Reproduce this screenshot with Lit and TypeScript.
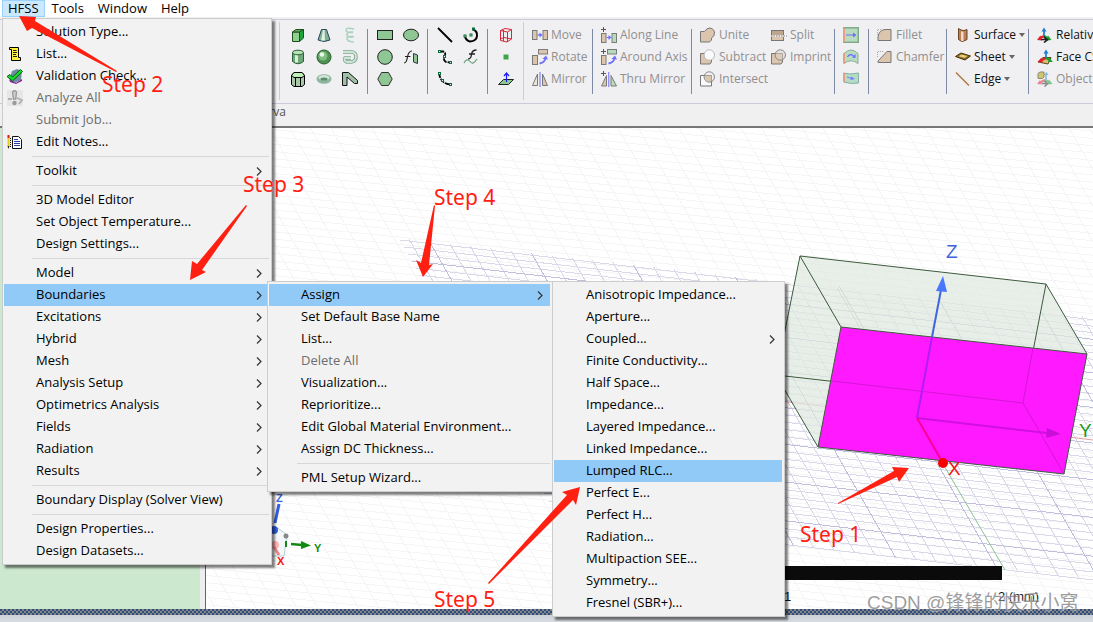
import { LitElement, html, svg, css, nothing, SVGTemplateResult } from "lit";
import { customElement, property } from "lit/decorators.js";
import { classMap } from "lit/directives/class-map.js";

/* ---------- icon drawings, 16 x 16 ---------- */
const G = "#8fc794";
const T = "#dcc5ad";
const icons: Record<string, SVGTemplateResult> = {
  box: svg`<path d="M2.500 5H9.500V14.500H2.500Z" fill="#8fd08f" stroke="#1f4f1f"/><path d="M2.500 5 6 2.500H13.500L9.500 5Z" fill="#5faf5f" stroke="#1f4f1f"/><path d="M9.500 5 13.500 2.500V11L9.500 14.500Z" fill="#1fa53a" stroke="#1f4f1f"/>`,
  cone: svg`<path d="M5.500 2.500H10.500L14 13Q8 16 2 13Z" fill="#7fae95" stroke="#2c4a5c"/><path d="M7 3 5 13.500H9L8.500 3Z" fill="#dff2e4"/>`,
  helix: svg`<g fill="none" stroke="#a9d3bf" stroke-width="1.500"><path d="M12 2Q4 0 4 3T11 5.500"/><path d="M11 5Q4 5 5 8T12 9.500"/><path d="M11 9.500Q4 9 5 12T12 15"/></g>`,
  cyl: svg`<path d="M2.500 3.500V12.500Q8 17 13.500 12.500V3.500Z" fill="#6ea878" stroke="#2f5f3a"/><path d="M5 4V13.500H8V4Z" fill="#d6efd9"/><ellipse cx="8" cy="3.500" rx="5.500" ry="2.300" fill="#b5e2b5" stroke="#2f5f3a"/>`,
  sphere: svg`<circle cx="8" cy="8" r="7" fill="#4e9152" stroke="#2c6132"/><circle cx="7" cy="7" r="4.500" fill="#7fbd80"/><circle cx="6" cy="5.500" r="2.300" fill="#e8f7e6"/>`,
  spiral: svg`<path d="M1 3H10Q14 3.500 14 8T9 13H5Q1.500 12 3 9H9" fill="none" stroke="#7ea58e" stroke-width="3.500"/><path d="M1 3H10Q14 3.500 14 8T9 13H5Q1.500 12 3 9H9" fill="none" stroke="#cfe6d6" stroke-width="1.800"/>`,
  prism: svg`<path d="M1.500 4.500 4 1.500H12L14.500 4.500V13.500L12 15.500H4L1.500 13.500Z" fill="#a8c8a8" stroke="#000"/><path d="M1.500 4.500 4 1.500H12L14.500 4.500 12 6.500H4Z" fill="#bff0b8" stroke="#000"/><path d="M5.500 6.500V15.500M10.500 6.500V15.500" stroke="#000"/>`,
  torus: svg`<ellipse cx="8" cy="8" rx="7.500" ry="4.800" fill="#8db69d"/><ellipse cx="8" cy="6.700" rx="5.500" ry="2.600" fill="#cfe5d6"/><ellipse cx="8" cy="8" rx="3.500" ry="1.500" fill="#5c8a6d"/>`,
  sweep: svg`<path d="M.5 14.500V1.500H6.500L15.500 9.500V12.500H12.500L5 6V14.500Z" fill="#9fc0a6" stroke="#111"/>`,
  rect: svg`<rect x=".5" y="3.500" width="15" height="9" fill="${G}" stroke="#222"/>`,
  ellipse: svg`<ellipse cx="8" cy="8" rx="7.500" ry="5.800" fill="${G}" stroke="#222"/>`,
  circle: svg`<circle cx="8" cy="8" r="7.300" fill="${G}" stroke="#222"/>`,
  eqsurf: svg`<path d="M1 14Q3.500 14 4.500 8T9 2M2 7.500H7.500" fill="none" stroke="#222" stroke-width="1.200"/><path d="M10.500 4.500 14.500 6V14.500L10.500 13Z" fill="${G}" stroke="#335"/>`,
  hex: svg`<path d="M.8 8 4.500 1.500H11.500L15.200 8 11.500 14.500H4.500Z" fill="${G}" stroke="#333"/>`,
  line: svg`<path d="M1 1 15 15" stroke="#000" stroke-width="1.800"/>`,
  arc: svg`<path d="M10 2.500Q14.500 4 14 9T7 14.500Q3 13.500 2 9.500" fill="none" stroke="#000" stroke-width="2"/><g fill="#dff5e4" stroke="#0c6b3a"><rect x="9.500" y="1" width="2" height="2"/><rect x="1" y="8" width="2" height="2"/><rect x="7" y="7" width="2" height="2"/></g>`,
  spline: svg`<path d="M2 2.500H6Q9 3 8 7Q5.500 11 9 13L13 13.500" fill="none" stroke="#000" stroke-width="1.800" stroke-dasharray="5 1"/><g fill="#dff5e4" stroke="#0c6b3a"><rect x="1.500" y="1.500" width="2" height="2"/><rect x="6.500" y="6.500" width="2" height="2"/><rect x="12.500" y="12.500" width="2" height="2"/></g>`,
  eqcurve: svg`<path d="M5 10Q8 10 8.500 5.500T13.500 1M6 5H12" fill="none" stroke="#222" stroke-width="1.300"/><path d="M1 14Q4 8.500 7 12.500T14 10" fill="none" stroke="#6aa27e" stroke-width="1.200"/>`,
  arc2: svg`<path d="M2 2Q3.500 12.500 13 13.500" fill="none" stroke="#000" stroke-width="1.800" stroke-dasharray="5 1"/><g fill="#dff5e4" stroke="#0c6b3a"><rect x="1.500" y="1.500" width="2" height="2"/><rect x="4.500" y="8.500" width="2" height="2"/><rect x="12.500" y="12.500" width="2" height="2"/></g>`,
  region: svg`<g fill="none" stroke="#d9263a"><path d="M2.500 3.500 7 1.500 13.500 2.500V12L9 15 2.500 13.500Z"/><path d="M2.500 3.500 9.500 5 13.500 2.500M9.500 5V15M5.500 3V14M2.500 12 6 10.500 13.500 12"/></g>`,
  point: svg`<rect x="5.500" y="5.500" width="5" height="5" fill="#3fa548"/>`,
  plane: svg`<path d="M.5 13.500 5.500 8.500H15.500L10.500 13.500Z" fill="${G}" stroke="#222"/><path d="M8.500 11V3" stroke="#1a1aff" stroke-width="1.200"/><path d="M6 5 8.500 2 11 5" fill="none" stroke="#1a1aff" stroke-width="1.200"/>`,
  move: svg`<g fill="${T}" stroke="#7a7a7a"><rect x=".5" y="3.500" width="4.500" height="9"/><rect x="11" y="3.500" width="4.500" height="9"/></g><path d="M5.500 8H8" stroke="#6d6dff" stroke-width="1.300"/><path d="M7.500 5.500 10.500 8 7.500 10.500Z" fill="#6d6dff"/>`,
  rotate: svg`<g fill="${T}" stroke="#7a7a7a"><rect x=".5" y="6.500" width="5" height="9"/><rect x="6.500" y=".5" width="9" height="4.500"/></g><path d="M7.500 14.500Q13 13.500 13.500 9" fill="none" stroke="#6d6dff" stroke-width="1.800"/><path d="M10.500 10 14 6.500 16 10.500Z" fill="#6d6dff"/>`,
  mirror: svg`<path d="M5.500 3V14.500H.5Z" fill="#eee5da" stroke="#7a7a7a"/><path d="M10.500 3V14.500H15.500Z" fill="${T}" stroke="#7a7a7a"/><path d="M8 1V16" stroke="#6d6dff"/>`,
  along: svg`<path d="M2.500 0V5M0 2.500H5" stroke="#555"/><rect x=".5" y="6.500" width="4.500" height="9" fill="${T}" stroke="#7a7a7a"/><rect x="11" y="6.500" width="4.500" height="9" fill="#b5dcbc" stroke="#7a7a7a"/><path d="M5.500 10.500H8" stroke="#6d6dff"/><path d="M7.500 8 10.500 10.500 7.500 13Z" fill="#6d6dff"/>`,
  around: svg`<path d="M2.500 0V5M0 2.500H5" stroke="#555"/><rect x=".5" y="6.500" width="4.500" height="9" fill="${T}" stroke="#7a7a7a"/><rect x="6.500" y=".5" width="9" height="4.500" fill="#b5dcbc" stroke="#7a7a7a"/><path d="M7.500 14.500Q13 13.500 13.500 9" fill="none" stroke="#6d6dff" stroke-width="1.800"/><path d="M10.500 10 14 6.500 16 10.500Z" fill="#6d6dff"/>`,
  thru: svg`<path d="M2.500 0V5M0 2.500H5" stroke="#555"/><path d="M5.500 4.500V15H.5Z" fill="${T}" stroke="#7a7a7a"/><path d="M10 4.500V15H15.500Z" fill="#b5dcbc" stroke="#7a7a7a"/><path d="M7.800 1V16" stroke="#6d6dff"/>`,
  unite: svg`<path d="M.5 15V4.500H4.500Q6.500 1 10 1Q14.500 2 14.500 6Q14.500 9.500 11.500 11V13L9.500 15Z" fill="${T}" stroke="#777"/>`,
  subtract: svg`<path d="M.5 15V4.500H11.500V13L10 15Z" fill="${T}" stroke="#777"/><circle cx="9.300" cy="6" r="5.200" fill="#fafafa" stroke="#bbb"/>`,
  intersect: svg`<path d="M.5 15V4.500H11.500V15Z" fill="#fafafa" stroke="#777"/><path d="M4.500 4.500H11.500V10.800Q5 12 4.500 4.500Z" fill="${T}"/><circle cx="9.300" cy="6" r="5.200" fill="none" stroke="#888"/>`,
  split: svg`<rect x=".5" y="3.500" width="12" height="10" fill="${T}" stroke="#777"/><path d="M1 4H12V8.500H1Z" fill="#bda58e"/><path d="M0 9H16" stroke="#fff" stroke-width="1.500"/><path d="M0 9H16" stroke="#777" stroke-dasharray="1.500 1"/>`,
  imprint: svg`<path d="M.5 15V4.500H11.500V13L10 15Z" fill="${T}" stroke="#777"/><circle cx="9.300" cy="6" r="5.200" fill="#ddd3c8" fill-opacity=".5" stroke="#888"/>`,
  sw1: svg`<rect x=".8" y=".8" width="14.500" height="14.500" fill="#b9dcc0" stroke="#7da98a" stroke-width="1.500"/><path d="M0 1V15H2V1Z" fill="#e8a080"/><path d="M3 8H11" stroke="#6d6dff"/><path d="M10 5.500 13.500 8 10 10.500Z" fill="#6d6dff"/>`,
  sw2: svg`<path d="M1 14.500V4.500Q8 -2.500 15 4.500V14.500Q8 9 1 14.500Z" fill="#b9dcc0" stroke="#86b093"/><path d="M0 4V14.500H2V4Z" fill="#e8a080"/><path d="M4.500 8Q7 4 10.500 7" fill="none" stroke="#6d6dff" stroke-width="1.300"/><path d="M9 8.500 12.500 5V9Z" fill="#6d6dff"/>`,
  sw3: svg`<path d="M.5 2Q6 4 15.500 2V12Q9 13.500 .5 11Z" fill="#b5dbc8" stroke="#86b0a0"/><path d="M0 2V11H2V2Z" fill="#e8a080"/><path d="M4 6 9 7.500" stroke="#6d7dff"/><path d="M8 5.500 12 8 7.500 9Z" fill="#6d7dff"/>`,
  fillet: svg`<path d="M.5 8V2.500H5" fill="none" stroke="#aaa" stroke-dasharray="1 1"/><path d="M1 13.500V10Q2 3 8 2.500H14V13.500Z" fill="${T}" stroke="#777"/>`,
  chamfer: svg`<path d="M.5 8V2.500H7" fill="none" stroke="#aaa" stroke-dasharray="1 1"/><path d="M1 13.500V12L10 2.500H14V13.500Z" fill="${T}" stroke="#777"/>`,
  surface: svg`<path d="M3.500 1.500V12.500Q7 16 10 13.500L12 12.500V2.500Q9 4.500 6 3Z" fill="#b8835a" stroke="#6b4223"/><path d="M6 4.500V14H8.500V4.500Z" fill="#f3d9bd"/>`,
  sheet: svg`<path d="M.5 7.500 6 4 15.500 7 10 11Z" fill="#8a6a1f" stroke="#4a3208"/><path d="M3.500 7.300 6.500 5.500 12.500 7 9.500 9Z" fill="#e3cf7e"/>`,
  edge: svg`<path d="M1 1.500 14 14.500" stroke="#b07a48" stroke-width="1.500"/>`,
  relcs: svg`<path d="M7 9V3" stroke="#1e7fd6" stroke-width="1.800"/><path d="M4.500 4.500 7 .5 9.500 4.500Z" fill="#1e7fd6"/><path d="M7 9 2 11.500" stroke="#e3202b" stroke-width="2"/><path d="M3.500 8.500 0 13 5 13.500Z" fill="#e3202b"/><path d="M7 9 12 11.500" stroke="#16a02c" stroke-width="2"/><path d="M11 8.500 14.500 13 9.500 13.500Z" fill="#16a02c"/><path d="M4 12.500H9M7 10 10.500 12.700 7 15.500" fill="none" stroke="#222" stroke-width="1.600"/>`,
  facecs: svg`<path d="M1 13 6 8.500H14L11 15Z" fill="#d8bd7a" stroke="#5b4a1c"/><path d="M9 9V3" stroke="#1e7fd6" stroke-width="1.800"/><path d="M6.500 4.500 9 .5 11.500 4.500Z" fill="#1e7fd6"/><path d="M9 9 4 11.500" stroke="#e3202b" stroke-width="2"/><path d="M4 9 .5 13 6 13.500Z" fill="#e3202b"/><path d="M9 9 13 11" stroke="#16a02c" stroke-width="2"/><path d="M12.500 8.500 15.800 13 11 13Z" fill="#16a02c"/>`,
  objcs: svg`<path d="M1 2.500 3 1H7V6L5.500 7.500H1Z" fill="#cfc56a" stroke="#8c8a70"/><g opacity=".5"><path d="M9 9V3" stroke="#1e7fd6" stroke-width="1.500"/><path d="M7 4 9.500 1 11.500 4Z" fill="#1e7fd6"/><path d="M8 9 3 11.500" stroke="#e3202b" stroke-width="2"/><path d="M3 9 0 13 5 13.500Z" fill="#e3202b"/><path d="M8 9 13 11.500" stroke="#16a02c" stroke-width="2"/><path d="M12 8.500 15.500 13 10.500 13.500Z" fill="#16a02c"/><path d="M5 12.500H9M7.500 10 10.500 12.700 7.500 15.500" fill="none" stroke="#222" stroke-width="1.500"/></g>`,
  list: svg`<path d="M2.500 1.500H11.500V11.500H13.500V14.500H4.500V3.500H2.500Z" fill="#ffee3a" stroke="#000"/><path d="M6 4.500H9.500M6 6.500H10M6 8.500H9M6 10.500H10" stroke="#222"/>`,
  check: svg`<path d="M5 3 10 1 15 3 14 12 8 15 2 13Z" fill="#6f8fa0"/><path d="M3 12 9 15 15 11V13L9 16 3 14Z" fill="#8a1fa0"/><path d="M0 8.500 3 6.500 5.500 9 13.500 1.500 15.500 3.500 5.500 13Z" fill="#12e02a" stroke="#064d10" stroke-width=".9"/>`,
  analyze: svg`<rect width="16" height="16" fill="#e6e6e6"/><path d="M5.500 2Q8 -.5 9.500 2L8.800 9H6.500Z" fill="#cfcfcf" stroke="#999" stroke-width="1.300"/><circle cx="7.500" cy="13" r="2.200" fill="#999"/><path d="M1 9H5M10 8 15 10 12 14" stroke="#b0b0b0" stroke-width="1.800" fill="none"/>`,
  notes: svg`<path d="M1.500 2V12" stroke="#e8c81e" stroke-width="2"/><path d="M1.500 1V4" stroke="#d92020" stroke-width="2"/><path d="M.5 12H2.500L1.500 15Z" fill="#222"/><path d="M5.500 2.500H11.500L14.500 5.500V14.500H5.500Z" fill="#fff" stroke="#111"/><path d="M7 5.500H11M7 7.500H13M7 9.500H13M7 11.500H13" stroke="#2a3fa8"/><path d="M3.500 4V13" stroke="#111" stroke-dasharray="1 1"/>`,
};

const icon = (name: string) =>
  html`<svg class="icon" viewBox="0 0 16 16" width="16" height="16" aria-hidden="true">${icons[name]}</svg>`;

/* ---------- drop-down menus ---------- */
interface Item { t: string; icon?: string; off?: boolean; sub?: boolean; hot?: boolean }
type Entry = Item | "-";

@customElement("menu-panel")
class MenuPanel extends LitElement {
  @property({ attribute: false }) items: Entry[] = [];
  static styles = css`
    :host { display: block; box-sizing: border-box; background: #f2f2f2; border: 1px solid #ccc; padding: 2px 2px 2px 1px; box-shadow: 3px 3px 2px rgba(0, 0, 0, 0.5); }
    button { all: unset; box-sizing: border-box; display: flex; align-items: center; width: 100%; height: 22px; padding-right: 7px; color: #000; font: 13px/20px "Open Sans", "Noto Sans", sans-serif; white-space: nowrap; }
    .hot { background: #91c9f7; }
    .off { color: #6d6d6d; }
    .slot { width: 32px; display: flex; padding-left: 3px; box-sizing: border-box; flex: none; }
    .label { flex: 1; padding-bottom: 2px; }
    hr { border: 0; height: 1px; margin: 3px 0 3px 28px; background: #d7d7d7; }
    .chev { width: 6px; height: 9px; fill: none; stroke: #333; stroke-width: 1.2; }
  `;
  render() {
    return this.items.map((e) =>
      e === "-"
        ? html`<hr />`
        : html`<button role="menuitem" class=${classMap({ hot: !!e.hot, off: !!e.off })} ?disabled=${e.off}>
            <span class="slot">${e.icon ? icon(e.icon) : nothing}</span>
            <span class="label">${e.t}</span>
            ${e.sub ? html`<svg class="chev" viewBox="0 0 6 9"><path d="M1 .5 5 4.500 1 8.500" /></svg>` : nothing}
          </button>`
    );
  }
}

const mainMenu: Entry[] = [
  { t: "Solution Type..." },
  { t: "List...", icon: "list" },
  { t: "Validation Check...", icon: "check" },
  { t: "Analyze All", icon: "analyze", off: true },
  { t: "Submit Job...", off: true },
  { t: "Edit Notes...", icon: "notes" },
  "-",
  { t: "Toolkit", sub: true },
  "-",
  { t: "3D Model Editor" },
  { t: "Set Object Temperature..." },
  { t: "Design Settings..." },
  "-",
  { t: "Model", sub: true },
  { t: "Boundaries", sub: true, hot: true },
  { t: "Excitations", sub: true },
  { t: "Hybrid", sub: true },
  { t: "Mesh", sub: true },
  { t: "Analysis Setup", sub: true },
  { t: "Optimetrics Analysis", sub: true },
  { t: "Fields", sub: true },
  { t: "Radiation", sub: true },
  { t: "Results", sub: true },
  "-",
  { t: "Boundary Display (Solver View)" },
  "-",
  { t: "Design Properties..." },
  { t: "Design Datasets..." },
];
const boundaryMenu: Entry[] = [
  { t: "Assign", sub: true, hot: true },
  { t: "Set Default Base Name" },
  { t: "List..." },
  { t: "Delete All", off: true },
  { t: "Visualization..." },
  { t: "Reprioritize..." },
  { t: "Edit Global Material Environment..." },
  { t: "Assign DC Thickness..." },
  "-",
  { t: "PML Setup Wizard..." },
];
const assignMenu: Entry[] = [
  { t: "Anisotropic Impedance..." },
  { t: "Aperture..." },
  { t: "Coupled...", sub: true },
  { t: "Finite Conductivity..." },
  { t: "Half Space..." },
  { t: "Impedance..." },
  { t: "Layered Impedance..." },
  { t: "Linked Impedance..." },
  { t: "Lumped RLC...", hot: true },
  { t: "Perfect E..." },
  { t: "Perfect H..." },
  { t: "Radiation..." },
  { t: "Multipaction SEE..." },
  { t: "Symmetry..." },
  { t: "Fresnel (SBR+)..." },
];

/* ---------- ribbon ---------- */
interface Tool { i: string; t?: string; off?: boolean; drop?: boolean; label?: string }
interface Group { cls: string; tools: Tool[] }

const glyphs = (...names: string[]): Tool[] => names.map((n) => ({ i: n, label: n }));
const dim = (i: string, t: string): Tool => ({ i, t, off: true });

const groups: Group[] = [
  { cls: "glyphs solids", tools: glyphs("box", "cyl", "prism", "cone", "sphere", "torus", "helix", "spiral", "sweep") },
  { cls: "glyphs sheets", tools: glyphs("rect", "circle", "hex", "ellipse", "eqsurf") },
  { cls: "glyphs lines", tools: glyphs("line", "spline", "arc2", "arc", "eqcurve") },
  { cls: "glyphs misc light", tools: glyphs("region", "point", "plane") },
  { cls: "transform", tools: [dim("move", "Move"), dim("rotate", "Rotate"), dim("mirror", "Mirror")] },
  { cls: "duplicate", tools: [dim("along", "Along Line"), dim("around", "Around Axis"), dim("thru", "Thru Mirror")] },
  { cls: "boolean", tools: [dim("unite", "Unite"), dim("subtract", "Subtract"), dim("intersect", "Intersect"), dim("split", "Split"), dim("imprint", "Imprint")] },
  { cls: "sweeps", tools: glyphs("sw1", "sw2", "sw3") },
  { cls: "corners", tools: [dim("fillet", "Fillet"), dim("chamfer", "Chamfer")] },
  { cls: "surfaces", tools: [{ i: "surface", t: "Surface", drop: true }, { i: "sheet", t: "Sheet", drop: true }, { i: "edge", t: "Edge", drop: true }] },
  { cls: "systems", tools: [{ i: "relcs", t: "Relative CS" }, { i: "facecs", t: "Face CS" }, dim("objcs", "Object CS")] },
];

@customElement("tool-ribbon")
class ToolRibbon extends LitElement {
  static styles = css`
    :host { display: flex; box-sizing: border-box; height: 85px; margin-top: 2px; padding-top: 2px; background: #f0eff2; border-top: 1px solid #cccadb; border-bottom: 1px solid #cccadb; overflow: hidden; }
    .home { flex: none; width: 280px; box-sizing: border-box; height: 78px; border-right: 1px solid #cccadb; }
    .group { flex: none; display: grid; grid-auto-flow: column; grid-template-rows: repeat(3, 22px); grid-auto-columns: max-content; align-content: start; padding: 2px 0 0 8px; box-sizing: border-box; height: 78px; position: relative; }
    .glyphs { justify-content: center; padding-left: 0; grid-auto-columns: 26px; }
    .group::after { content: ""; position: absolute; right: 0; top: 7px; height: 65px; width: 1px; background: #7c8aa3; }
    .light::after { top: 0; height: 78px; background: #cccadb; }
    .solids { width: 88px; }
    .sheets, .lines { width: 60px; }
    .misc { width: 36px; }
    .transform { width: 69px; }
    .duplicate { width: 99px; }
    .boolean { width: 143px; grid-auto-columns: 71px; }
    .sweeps { width: 34px; }
    .corners { width: 78px; }
    .surfaces { width: 82px; }
    .systems { width: 120px; }
    button { all: unset; display: flex; align-items: center; gap: 3px; height: 22px; font: 12px/22px "Open Sans", "Noto Sans", sans-serif; color: #111; white-space: nowrap; }
    .glyphs button { justify-content: center; }
    .off { color: #909090; }
    .caret { width: 0; height: 0; border: 3px solid transparent; border-top: 4px solid #666; border-bottom: 0; }
  `;
  render() {
    return html`<div class="home"></div>
      ${groups.map(
        (g) => html`<div class="group ${g.cls}">
          ${g.tools.map(
            (t) => html`<button class=${classMap({ off: !!t.off })} ?disabled=${t.off} aria-label=${t.t ?? t.label ?? ""}>
              ${icon(t.i)}${t.t ? html`<span>${t.t}</span>` : nothing}${t.drop ? html`<i class="caret"></i>` : nothing}
            </button>`
          )}
        </div>`
      )}`;
  }
}

/* ---------- 3D view ---------- */
const SLOPE = 0.115;
const LEAN = 0.57;

function faintGrid() {
  const out: SVGTemplateResult[] = [];
  for (let c = 20; c < 640; c += 7.3) out.push(svg`<path d="M200 ${c}L1100 ${c + 900 * 0.1}" />`);
  for (let x = -120; x < 1100; x += 20.5) out.push(svg`<path d="M${x} 128L${x + 480 * LEAN} 608" />`);
  return out;
}

function mainGrid() {
  const minor: SVGTemplateResult[] = [];
  const major: SVGTemplateResult[] = [];
  let c = 194;
  const rows = 36;
  for (let r = 0; r <= rows; r++) {
    const x = 400 + ((c - 194) / 0.934) * LEAN;
    (r % 5 === 3 ? major : minor).push(svg`<path d="M${x} ${c + SLOPE * x}L1100 ${c + SLOPE * 1100}" />`);
    c += 6.5 + (1.5 * r) / rows;
  }
  const depth = (c - 194 - 6) / 0.934;
  for (let i = 0; i < 36; i++) {
    const x = 409 + i * 20.4;
    const y = 192 + SLOPE * x;
    (i % 5 === 1 ? major : minor).push(svg`<path d="M${x} ${y}L${x + depth * LEAN} ${y + depth}" />`);
  }
  return svg`<g stroke="#d9d9ea">${minor}</g><g stroke="#c0c0de">${major}</g>`;
}

@customElement("model-view")
class ModelView extends LitElement {
  static styles = css`
    :host { display: block; background: #fff; overflow: hidden; min-width: 0; }
    svg { display: block; width: 100%; height: 100%; }
    text { font-family: "Liberation Sans", Arial, sans-serif; }
    .axis { font-size: 19px; }
    .mini { font-size: 11px; font-weight: 700; }
    .scale { font-size: 13px; fill: #111; }
  `;
  render() {
    return html`<svg viewBox="206 128 887 481" preserveAspectRatio="xMinYMin slice" role="img" aria-label="3D model">
      <g stroke="#f5f5f5" fill="none" shape-rendering="crispEdges">${faintGrid()}</g>
      <g fill="none" shape-rendering="crispEdges">${mainGrid()}</g>
      <path d="M780 401L1093 440" stroke="#e0a0a0" fill="none" />
      <path d="M839 286L1005 570" stroke="#8fbf93" fill="none" />
      <path d="M800 256 1046 284 1087 354 1064 474 818 447 776 375Z" fill="#dfe9e1" fill-opacity=".72" />
      <path d="M800 256 1046 284 1087 354M800 256 776 375 818 447M800 256 841 327M1046 284 1023 403M776 375 1023 403 1064 474" fill="none" stroke="#3c5a3c" />
      <path d="M841 327 1087 354 1064 474 818 447Z" fill="#ff19ff" stroke="#3c5a3c" />
      <path d="M832 381 1023 403 1064 474M1023 403 1033 348" fill="none" stroke="#d416d6" />
      <path d="M917 418 932 337" stroke="#b41cf5" stroke-width="2" />
      <path d="M932 337 941 290" stroke="#3f66dc" stroke-width="2" />
      <path d="M943 276 936 291 947 292Z" fill="#4a76ff" />
      <path d="M917 418 1047 433" stroke="#d00fe0" stroke-width="2" />
      <path d="M1047 428 1061 434 1046 438Z" fill="#c90fd8" />
      <path d="M917 418 943 463" stroke="#ff0096" stroke-width="2" />
      <circle cx="943" cy="463" r="5" fill="#f80000" />
      <text class="axis" x="946" y="258" fill="#3c64d8">Z</text>
      <text class="axis" x="1079" y="437" fill="#1a9a1a">Y</text>
      <text class="axis" x="948" y="475" fill="#f01414">X</text>
      <path d="M570 566H1002V580H570Z" fill="#0b0b0b" />
      <text class="scale" x="784" y="601">1</text>
      <text class="scale" x="998" y="601">2 (mm)</text>
      <path d="M262 540 278 528 287 535 284 556H266" fill="#f4f8fa" stroke="#b4ccd8" />
      <path d="M275 523 279 504" stroke="#2f5fe0" stroke-width="3" />
      <circle cx="274" cy="530" r="4" fill="#2f5fe0" />
      <circle cx="286" cy="536" r="2.500" fill="#888" />
      <path d="M286 541V547" stroke="#128a12" stroke-width="2" />
      <path d="M291 544 302 545" stroke="#128a12" stroke-width="2.500" />
      <path d="M301 541 311 545.500 301 549Z" fill="#128a12" />
      <circle cx="275" cy="545" r="4" fill="#ffb4b4" />
      <path d="M274 547 279 555" stroke="#e88" stroke-width="3" />
      <text class="mini" x="276" y="502" fill="#3c64d8">Z</text>
      <text class="mini" x="314" y="552" fill="#128a12">Y</text>
      <text class="mini" x="277" y="565" fill="#f01414">X</text>
    </svg>`;
  }
}

/* ---------- page ---------- */
@customElement("app-root")
class AppRoot extends LitElement {
  static styles = css`
    :host { display: flex; flex-direction: column; position: relative; height: 100vh; overflow: hidden; background: #f0f0f0; font: 13px/17px "Open Sans", "Noto Sans", sans-serif; }
    nav { display: flex; height: 17px; padding-left: 2px; background: #fff; flex: none; }
    nav button { all: unset; box-sizing: border-box; padding: 0 7px; font: 13px/17px "Open Sans", "Noto Sans", sans-serif; color: #000; }
    nav .open { background: #cce8ff; box-shadow: inset 0 0 0 1px #99d1ff; padding: 0 6px; }
    tool-ribbon { flex: none; }
    .tabs { flex: none; height: 24px; box-sizing: border-box; border-bottom: 2px solid #777; display: flex; }
    .tab { width: 286px; text-align: right; font: 12px/15px "Open Sans", "Noto Sans", sans-serif; color: #555; }
    main { flex: 1; min-height: 0; display: flex; }
    aside { flex: none; width: 206px; box-sizing: border-box; background: #cce8cf; border-right: 1px solid #666; box-shadow: inset -5px 0 #eee; }
    model-view { flex: 1; }
    .splitter { flex: none; height: 6px; background: radial-gradient(circle at 1px 1px, #2f4f80 1px, transparent 1px) 0 0 / 4px 4px, radial-gradient(circle at 1px 1px, #2f4f80 1px, transparent 1px) 2px 2px / 4px 4px, #858585; }
    footer { flex: none; height: 7px; background: linear-gradient(#ccd1da, #d8dbe1); }
    menu-panel { position: absolute; }
    .m1 { left: 2px; top: 18px; width: 270px; }
    .m2 { left: 267px; top: 281px; width: 286px; }
    .m3 { left: 552px; top: 281px; width: 233px; }
    .notes { position: absolute; left: 0; top: 0; width: 1093px; height: 622px; pointer-events: none; fill: #ff2012; }
    .step { font: 21px "Noto Sans", "Open Sans", sans-serif; }
    .mark { font: 19px "Liberation Sans", "Noto Sans CJK SC", sans-serif; fill: rgba(90, 90, 90, 0.6); stroke: rgba(255, 255, 255, 0.4); stroke-width: 2px; paint-order: stroke; }
  `;
  render() {
    return html`
      <nav>
        <button class="open">HFSS</button><button>Tools</button><button>Window</button><button>Help</button>
      </nav>
      <tool-ribbon></tool-ribbon>
      <div class="tabs"><span class="tab">rva</span></div>
      <main>
        <aside></aside>
        <model-view></model-view>
      </main>
      <div class="splitter"></div>
      <footer></footer>
      <menu-panel class="m1" role="menu" .items=${mainMenu}></menu-panel>
      <menu-panel class="m2" role="menu" .items=${boundaryMenu}></menu-panel>
      <menu-panel class="m3" role="menu" .items=${assignMenu}></menu-panel>
      <svg class="notes" viewBox="0 0 1093 622">
        <path d="M19 16 36 17 35 21 117 71 116 72 32 28 27 31Z" />
        <path d="M190 280 192 261 197 264 246 205 247 206 202 270 206 272Z" />
        <path d="M423 277 416 260 421 263 434 205 435 206 429 265 433 264Z" />
        <path d="M909 468 892 467 894 471 838 503 838 504 897 477 899 482Z" />
        <path d="M580 487 562 492 567 495 488 583 489 584 573 500 576 505Z" />
        <text class="step" x="102" y="92">Step 2</text>
        <text class="step" x="243" y="192">Step 3</text>
        <text class="step" x="434" y="205">Step 4</text>
        <text class="step" x="800" y="542">Step 1</text>
        <text class="step" x="434" y="607">Step 5</text>
        <text class="mark" x="867" y="609">CSDN @锋锋的快乐小窝</text>
      </svg>
    `;
  }
}
